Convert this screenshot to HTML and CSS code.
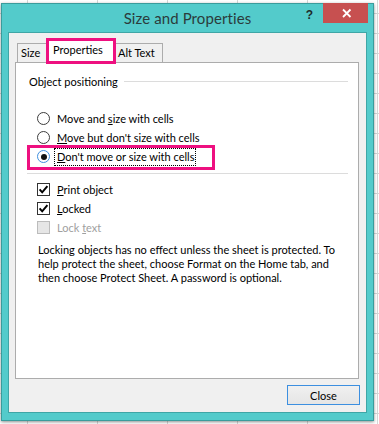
FILE: index.html
```html
<!DOCTYPE html>
<html>
<head>
<meta charset="utf-8">
<link rel="stylesheet" href="styles.css">
</head>
<body>
<div class="window">
  <div class="titlebar">
    <div></div>
    <div class="title">Size and Properties</div>
    <div class="controls">
      <span class="help">?</span>
      <span class="close-x"><svg width="10" height="10" viewBox="0 0 10 10"><path d="M1 1.5 L8.5 9 M8.5 1.5 L1 9" stroke="#fff" stroke-width="1.8" fill="none"/></svg></span>
    </div>
  </div>
  <div class="client">
    <div class="tabs">
      <div class="tab tab-size">Size</div>
      <div class="tab active">Properties</div>
      <div class="tab tab-alt">Alt Text</div>
    </div>
    <div class="panel">
      <div class="group-head"><span>Object positioning</span><div class="rule"></div></div>
      <div class="options">
        <div class="opt"><span class="radio"></span><span class="lbl">Move and <u>s</u>ize with cells</span></div>
        <div class="opt"><span class="radio"></span><span class="lbl"><u>M</u>ove but don't size with cells</span></div>
        <div class="highlight">
          <div class="opt opt-focus"><span class="radio checked"></span><span class="lbl focus"><u>D</u>on't move or size with cells</span></div>
        </div>
      </div>
      <div class="sep"></div>
      <div class="checks">
        <div class="opt"><span class="check"><svg width="13" height="13" viewBox="0 0 13 13"><path d="M2.6 6.4 L5.2 9.3 L10.4 3.2" stroke="#000" stroke-width="2" fill="none"/></svg></span><span class="lbl"><u>P</u>rint object</span></div>
        <div class="opt"><span class="check"><svg width="13" height="13" viewBox="0 0 13 13"><path d="M2.6 6.4 L5.2 9.3 L10.4 3.2" stroke="#000" stroke-width="2" fill="none"/></svg></span><span class="lbl"><u>L</u>ocked</span></div>
        <div class="opt disabled"><span class="check"></span><span class="lbl">Lock <u>t</u>ext</span></div>
      </div>
      <p class="note">Locking objects has no effect unless the sheet is protected. To<br>help protect the sheet, choose Format on the Home tab, and<br>then choose Protect Sheet. A password is optional.</p>
    </div>
    <div class="footer"><button class="btn">Close</button></div>
  </div>
</div>
</body>
</html>
```
FILE: styles.css
```css
html, body {
  margin: 0;
  padding: 0;
}
body {
  width: 379px;
  height: 424px;
  overflow: hidden;
  background-color: #fff;
  background-image:
    linear-gradient(to right, #d6d6d6 1px, transparent 1px),
    linear-gradient(to bottom, #d6d6d6 1px, transparent 1px);
  background-size: 70px 20px;
  background-position: 27px 13px;
  font-family: Lato, "Open Sans", sans-serif;
  font-size: 11px;
  color: #000;
}
.window {
  box-sizing: border-box;
  margin: 3px 0 0 1px;
  width: 373px;
  height: 418px;
  background: #53cbcb;
  border: 1px solid #3a9c9c;
  box-shadow: 0 1px 3px rgba(0, 0, 0, 0.45);
  padding: 0 6px 7px 6px;
  display: flex;
  flex-direction: column;
}
.titlebar {
  height: 28px;
  margin: 0 -6px;
  display: grid;
  grid-template-columns: 1fr auto 1fr;
  align-items: center;
}
.title {
  font-size: 15px;
  color: #2b3b3b;
  letter-spacing: 0.1px;
}
.controls {
  align-self: start;
  display: flex;
  justify-content: flex-end;
  align-items: flex-start;
  padding-right: 5px;
}
.help {
  font-family: "Liberation Sans", sans-serif;
  font-weight: bold;
  font-size: 12px;
  color: #1e2a2a;
  margin-top: 5px;
  margin-right: 10px;
  line-height: 12px;
}
.close-x {
  width: 45px;
  height: 20px;
  margin-top: -1px;
  background: #c75050;
  display: flex;
  align-items: center;
  justify-content: center;
}
.close-x svg {
  display: block;
  margin-left: 2px;
}
.client {
  flex: 1;
  background: #f0f0f0;
  border: 1px solid #3fa6a6;
  display: flex;
  flex-direction: column;
}
.tabs {
  display: flex;
  align-items: flex-end;
  margin: 4px 0 0 8px;
  height: 26px;
}
.tab {
  box-sizing: border-box;
  height: 19px;
  margin-bottom: 1px;
  background: #f0f0f0;
  border: 1px solid #acacac;
  border-bottom: none;
  line-height: 18px;
}
.tab-size {
  width: 30px;
  padding-left: 3px;
}
.tab-alt {
  width: 47px;
  border-left: none;
  padding-left: 2px;
}
.tab.active {
  position: relative;
  z-index: 1;
  width: 70px;
  height: 26px;
  margin-bottom: -1px;
  margin-left: -1px;
  background: #fff;
  border: 3px solid #ee1080;
  padding-left: 4px;
  line-height: 17px;
}
.panel {
  flex: 1;
  margin: -1px 7px 0 6px;
  background: #fff;
  border: 1px solid #acacac;
  padding-top: 11px;
}
.group-head {
  display: flex;
  align-items: center;
  height: 15px;
  padding-left: 13px;
  padding-right: 10px;
  line-height: 15px;
}
.rule {
  flex: 1;
  height: 1px;
  background: #dcdcdc;
  margin-left: 6px;
}
.options {
  margin-top: 20px;
  padding-left: 21px;
}
.opt {
  display: flex;
  align-items: center;
  height: 19px;
}
.lbl {
  margin-left: 7px;
  line-height: 16px;
}
.radio {
  box-sizing: border-box;
  width: 13px;
  height: 13px;
  border-radius: 50%;
  border: 1px solid #3c3c3c;
  background: #fff;
  display: flex;
  align-items: center;
  justify-content: center;
}
.radio.checked {
  border-color: #3f8fdf;
}
.radio.checked::after {
  content: "";
  width: 6px;
  height: 6px;
  border-radius: 50%;
  background: #111;
}
.highlight {
  box-sizing: border-box;
  width: 188px;
  margin: -2px 0 0 -10px;
  border: 3px solid #ee1080;
  padding: 0 0 1px 7px;
}
.opt-focus {
  margin-top: -1px;
}
.focus {
  margin-left: 4px;
  padding: 0 1px 0 2px;
  border: 1px dotted #000;
}
.sep {
  height: 1px;
  background: #dcdcdc;
  margin: 3px 10px 0 11px;
}
.checks {
  margin-top: 6px;
  padding-left: 21px;
}
.check {
  box-sizing: border-box;
  width: 13px;
  height: 13px;
  border: 1px solid #333;
  background: #fff;
  position: relative;
}
.check svg {
  position: absolute;
  left: -1px;
  top: -1px;
}
.disabled .check {
  background: #e6e6e6;
  border-color: #bcbcbc;
}
.disabled .lbl {
  color: #a0a0a0;
}
.note {
  margin: 6px 0 0 22px;
  line-height: 14px;
}
.footer {
  display: flex;
  justify-content: flex-end;
  padding: 6px 6px 7px 0;
}
.btn {
  box-sizing: border-box;
  width: 73px;
  height: 20px;
  border: 1px solid #3c8fe0;
  background: linear-gradient(#f0f0f0, #e5e5e5);
  font-family: Lato, "Open Sans", sans-serif;
  font-size: 11px;
  color: #000;
  padding: 0;
  margin: 0;
}
```
